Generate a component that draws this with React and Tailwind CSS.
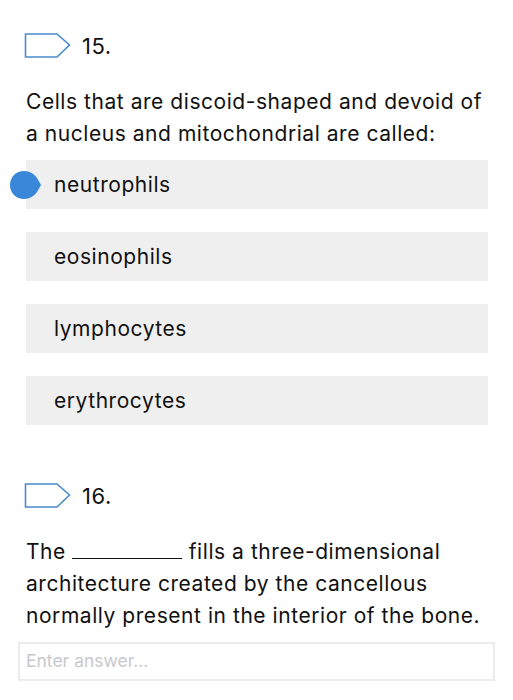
import React from "react";

function Flag() {
    return (
        <svg width="48" height="28" viewBox="0 0 48 28" className="shrink-0">
            <path d="M1.5 2 H33 L45.5 13 L33 25 H1.5 Z" fill="none" stroke="#4a8bcb" strokeWidth="1.6" strokeLinejoin="miter" />
        </svg>
    );
}

function Dot() {
    return (
        <svg width="34" height="30" viewBox="0 0 34 30" className="absolute left-[-17px] top-[10px]">
            <path d="M15 1 C21 1 25 4 28 8 L32 15 L28 22 C25 26 21 29 15 29 C7 29 1 23 1 15 C1 7 7 1 15 1 Z" fill="#3a86d9" />
        </svg>
    );
}

const options = ["neutrophils", "eosinophils", "lymphocytes", "erythrocytes"];

export default function App() {
    return (
        <div className="w-[513px] h-[700px] bg-white text-[#111] font-['Inter',sans-serif] tracking-[0.55px] overflow-hidden">
            <div className="flex items-center gap-[10px] pl-[24px] pt-[32px]">
                <Flag />
                <span className="text-[22px] leading-none">15.</span>
            </div>
            <p className="pl-[26px] pr-[20px] mt-[26px] text-[21px] leading-[32px]">
                Cells that are discoid-shaped and devoid of a nucleus and mitochondrial are called:
            </p>
            <div className="flex flex-col gap-[23px] mt-[10px] pl-[26px] pr-[25px]">
                {options.map((opt, i) => (
                    <div key={i} className="relative h-[49px] bg-[#efefef] flex items-center pl-[28px] text-[21px]">
                        {i === 0 && <Dot />}
                        {opt}
                    </div>
                ))}
            </div>
            <div className="flex items-center gap-[10px] pl-[24px] mt-[57px]">
                <Flag />
                <span className="text-[22px] leading-none">16.</span>
            </div>
            <p className="pl-[26px] pr-[20px] mt-[26px] text-[21px] leading-[32px]">
                The <span className="inline-block w-[110px] border-b-[1.5px] border-[#111]"></span> fills a three-dimensional architecture created by the cancellous normally present in the interior of the bone.
            </p>
            <div className="mt-[10px] mx-[18px] h-[39px] border-2 border-[#ececec] flex items-center">
                <input placeholder="Enter answer..." className="w-full px-[6px] text-[17.5px] tracking-normal outline-none placeholder:text-[#c8c8cc] font-['Inter',sans-serif]" />
            </div>
        </div>
    );
}
